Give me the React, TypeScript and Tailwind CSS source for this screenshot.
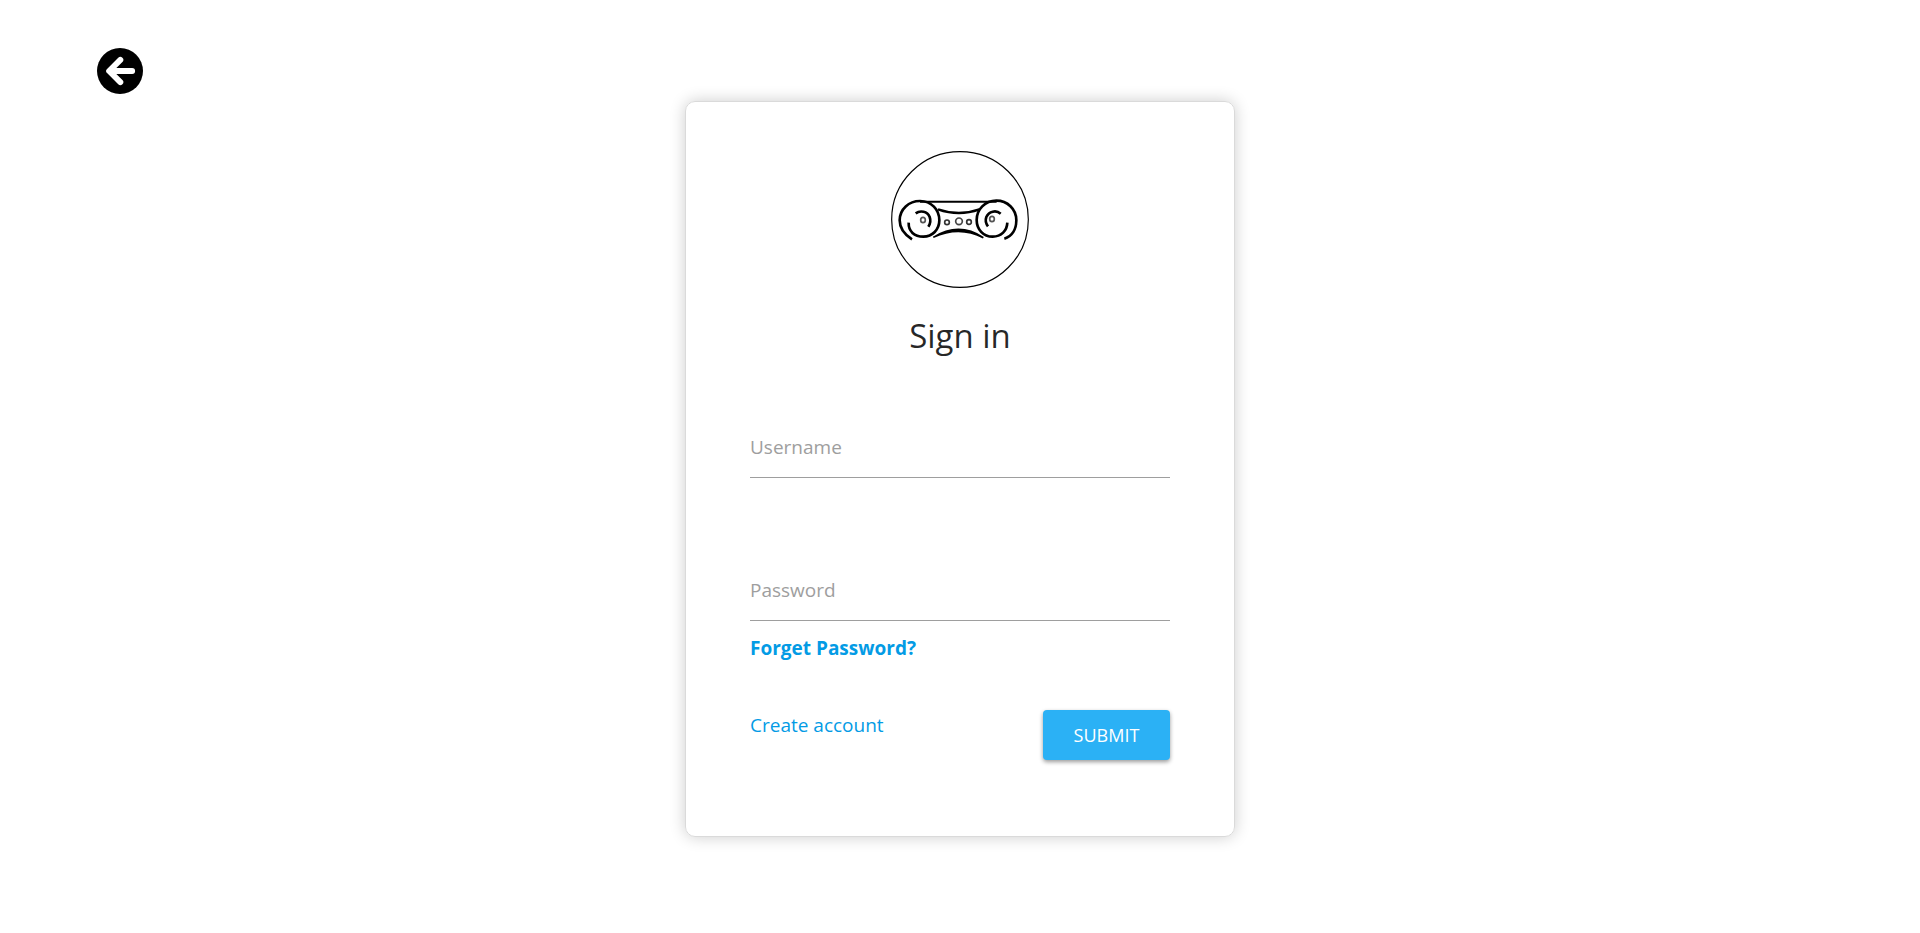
import React, { useState } from 'react';

interface FieldProps {
  id: string;
  label: string;
  type: string;
  value: string;
  onChange: (value: string) => void;
}

const Field: React.FC<FieldProps> = ({ id, label, type, value, onChange }) => (
  <div className="relative">
    <input
      id={id}
      type={type}
      value={value}
      placeholder=" "
      onChange={(e) => onChange(e.target.value)}
      className="peer block h-[60px] w-full border-b border-[#9e9e9e] bg-transparent outline-none focus:border-[#039be5]"
    />
    <label
      htmlFor={id}
      className="pointer-events-none absolute top-0 left-0 text-sm leading-4 text-[#9e9e9e] transition-all peer-placeholder-shown:text-[19px] peer-placeholder-shown:leading-[58px] peer-focus:text-sm peer-focus:leading-4 peer-focus:text-[#039be5]"
    >
      {label}
    </label>
  </div>
);

const BackIcon = () => (
  <svg viewBox="0 0 140 140" className="size-[46px]" aria-hidden="true">
    <circle cx="70" cy="70" r="70" fill="#000" />
    <path
      d="M71 36 L37 70 L71 104 M39 70 H107"
      fill="none"
      stroke="#fff"
      strokeWidth="18"
      strokeLinecap="round"
      strokeLinejoin="round"
    />
  </svg>
);

// Ionic capital inside a thin ring
const Logo = () => (
  <svg
    viewBox="33 33 414 411"
    className="h-[137px] w-[138px]"
    fill="none"
    stroke="#000"
    role="img"
    aria-label="Logo"
  >
    <ellipse cx="240" cy="238.500" rx="205" ry="203.500" strokeWidth="3.500" />
    <path d="M120 185.500 H350" strokeWidth="6" />
    <path d="M174 208 Q237 230 298 208" strokeWidth="7" />
    <path d="M160 292 Q237 244 310 293 Q237 256 160 292 Z" strokeWidth="5" fill="#000" />

    <path
      d="M96 298 C72 283 59 266 59 241 C59 207 87 183 120 183 C154 183 178 209 178 241 C178 269 157 290 130 290 C103 290 85 274 86 248"
      strokeWidth="8"
    />
    <path d="M107 220 C121 210 142 214 149 231 C153 242 151 251 145 260" strokeWidth="8" />
    <ellipse cx="129" cy="240" rx="7" ry="8" stroke="#555" strokeWidth="5" />

    <path
      d="M373 296 C396 289 409 268 409 241 C409 207 382 182 349 182 C315 182 290 208 290 240 C290 268 310 290 338 290 C364 290 381 272 382 248"
      strokeWidth="8"
    />
    <path d="M362 221 C348 209 327 214 319 231 C315 242 318 251 324 259" strokeWidth="8" />
    <ellipse cx="336" cy="237" rx="7" ry="8" stroke="#555" strokeWidth="5" />

    <circle cx="201" cy="247" r="7" stroke="#333" strokeWidth="5" />
    <circle cx="237" cy="244" r="10" stroke="#444" strokeWidth="5" />
    <circle cx="267" cy="246" r="7" stroke="#333" strokeWidth="5" />
  </svg>
);

const App: React.FC = () => {
  const [username, setUsername] = useState('');
  const [password, setPassword] = useState('');

  return (
    <div className="min-h-screen bg-white font-['Open_Sans','Noto_Sans',sans-serif] text-[19px] leading-[30px] text-black/85">
      <header className="flex px-[97px] pt-12">
        <a href="#" aria-label="Back">
          <BackIcon />
        </a>
      </header>

      <main className="flex justify-center px-4 pt-[7px] pb-24">
        <div className="w-full max-w-[550px] rounded-[10px] border border-[#dadada] px-16 pt-[49px] pb-[76px] shadow-[0_0_16px_rgba(0,0,0,0.2)]">
          <div className="flex flex-col items-center">
            <Logo />
            <h1 className="mt-7 text-[33px] leading-10">Sign in</h1>
          </div>

          <form className="mt-[62px]" onSubmit={(e) => e.preventDefault()}>
            <div className="flex flex-col gap-[83px]">
              <Field
                id="username"
                label="Username"
                type="text"
                value={username}
                onChange={setUsername}
              />
              <Field
                id="password"
                label="Password"
                type="password"
                value={password}
                onChange={setPassword}
              />
            </div>

            <a href="#" className="mt-3 block w-fit font-bold text-[#039be5]">
              Forget Password?
            </a>

            <div className="mt-[47px] flex items-start justify-between">
              <a href="#" className="text-[#039be5]">
                Create account
              </a>
              <button
                type="submit"
                className="h-[50px] w-[127px] rounded bg-[#2bb1f5] text-lg text-white uppercase shadow-[0_2px_4px_rgba(0,0,0,0.4)]"
              >
                Submit
              </button>
            </div>
          </form>
        </div>
      </main>
    </div>
  );
};

export default App;
